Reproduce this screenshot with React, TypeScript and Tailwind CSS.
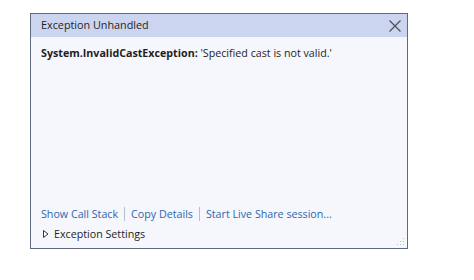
export default function App() {
  return (
    <div className="w-[474px] h-[280px] bg-white pl-[30px] pt-[13px]" style={{ fontFamily: '"Open Sans", "Noto Sans", sans-serif' }}>
      <div className="w-[378px] h-[236px] border border-[#5f6a80] bg-[#f5f7fc] flex flex-col relative">
        <div className="h-[23px] bg-[#ccd5f0] flex items-center justify-between pl-[10px] pr-[4px]">
          <span className="text-[10.8px] text-[#1e1e1e]">Exception Unhandled</span>
          <svg width="14" height="14" viewBox="0 0 14 14" className="mr-[1px]">
            <path d="M1.5 1.5 L12.5 12.5 M12.5 1.5 L1.5 12.5" stroke="#4a4f5a" strokeWidth="1.2" fill="none" />
          </svg>
        </div>
        <div className="pl-[10px] pt-[8px] text-[10.7px] text-[#1e1e1e]">
          <span className="font-bold">System.InvalidCastException:</span> 'Specified cast is not valid.'
        </div>
        <div className="flex-1" />
        <div className="pl-[10px] flex items-center text-[10.7px] text-[#2f66ac]">
          <span>Show Call Stack</span>
          <span className="mx-[6px] w-px h-[14px] bg-[#b6bdcc]" />
          <span>Copy Details</span>
          <span className="mx-[6px] w-px h-[14px] bg-[#b6bdcc]" />
          <span>Start Live Share session...</span>
        </div>
        <div className="pl-[12px] pt-[4px] pb-[6px] flex items-center text-[10.7px] text-[#1e1e1e]">
          <svg width="6" height="8" viewBox="0 0 6 8" className="mr-[5px]">
            <path d="M0.5 0.5 L5 4 L0.5 7.5 Z" fill="#ffffff" stroke="#333" strokeWidth="1" />
          </svg>
          <span>Exception Settings</span>
        </div>
        <svg width="8" height="8" viewBox="0 0 8 8" className="absolute right-[2px] bottom-[2px]">
          <rect x="6" y="0" width="1" height="1" fill="#b8bcc6" />
          <rect x="6" y="3" width="1" height="1" fill="#b8bcc6" />
          <rect x="3" y="3" width="1" height="1" fill="#b8bcc6" />
          <rect x="6" y="6" width="1" height="1" fill="#b8bcc6" />
          <rect x="3" y="6" width="1" height="1" fill="#b8bcc6" />
          <rect x="0" y="6" width="1" height="1" fill="#b8bcc6" />
        </svg>
      </div>
    </div>
  );
}
